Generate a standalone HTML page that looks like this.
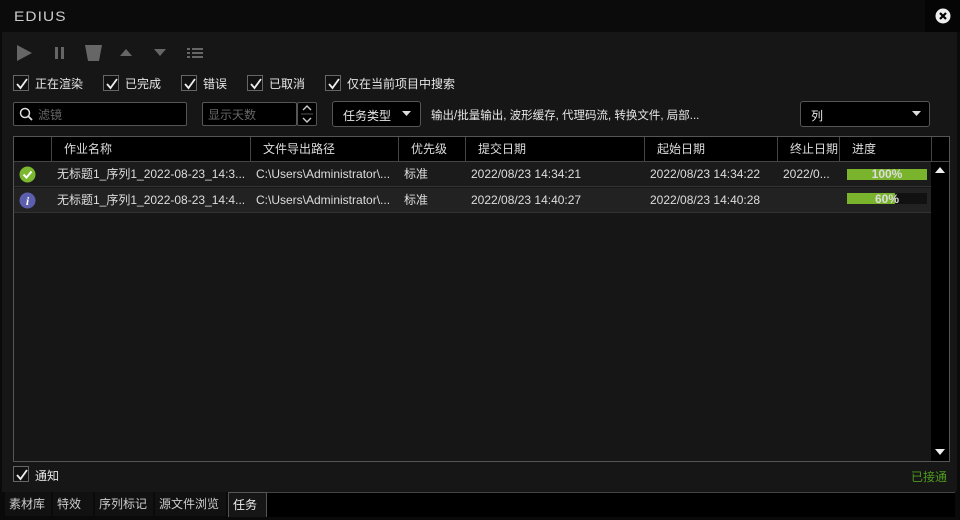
<!DOCTYPE html>
<html><head><meta charset="utf-8"><style>
*{box-sizing:border-box;margin:0;padding:0}
body{width:960px;height:520px;background:#0a0a0a;font-family:"Liberation Sans","Noto Sans CJK SC",sans-serif;font-size:12px;color:#ddd;position:relative;overflow:hidden}
.a{position:absolute}
.title{left:0;top:0;width:960px;height:32px;background:#0b0b0b}
.main{left:2px;top:32px;width:955px;height:460px;background:#161616}
.cb{position:absolute;width:16px;height:16px;border:1px solid #666;background:#111}
.cb svg{position:absolute;left:1px;top:1px}
.lbl{position:absolute;font-size:12px;color:#e6e6e6;white-space:nowrap}
.box{position:absolute;border:1px solid #555;border-radius:2px;background:#000}
.th{position:absolute;top:137px;height:24px;line-height:24px;border-right:1px solid #444;color:#ddd;white-space:nowrap;overflow:hidden}
.td{position:absolute;height:25px;line-height:25px;white-space:nowrap;color:#ddd}
.tab{position:absolute;top:492px;height:24px;line-height:24px;background:#111;color:#ccc;padding-left:4px;font-size:12px}
</style></head><body>
<div class="a title"></div>
<div class="a" style="left:14px;top:8px;font-size:14px;color:#ccc;letter-spacing:1px;transform:scaleX(1.1);transform-origin:left">EDIUS</div>
<div class="a" style="left:925px;top:0;width:35px;height:32px;background:#050505"></div>
<svg class="a" style="left:935px;top:8px" width="16" height="16"><circle cx="8" cy="8" r="7.5" fill="#eee"/><path d="M5 5L11 11M11 5L5 11" stroke="#000" stroke-width="2.2"/></svg>
<div class="a main"></div>
<!-- toolbar -->
<svg class="a" style="left:16px;top:44px" width="200" height="18">
<path d="M1 1L16 9L1 17Z" fill="#666"/>
<rect x="39" y="3" width="3" height="12" fill="#666"/><rect x="45" y="3" width="3" height="12" fill="#666"/>
<path d="M69 1H86L83 17H72Z" fill="#666"/>
<path d="M104 12L110 5L116 12Z" fill="#666"/>
<path d="M138 5L144 12L150 5Z" fill="#666"/>
<g fill="#666"><rect x="171" y="4" width="3" height="2"/><rect x="176" y="4" width="11" height="2"/><rect x="171" y="8" width="3" height="2"/><rect x="176" y="8" width="11" height="2"/><rect x="171" y="12" width="3" height="2"/><rect x="176" y="12" width="11" height="2"/></g>
</svg>
<!-- checkboxes -->
<div class="cb" style="left:13px;top:75px"><svg width="14" height="14"><path d="M2 7L5.5 11L12 2" stroke="#eee" stroke-width="1.8" fill="none"/></svg></div><div class="lbl" style="left:35px;top:75px">正在渲染</div>
<div class="cb" style="left:103px;top:75px"><svg width="14" height="14"><path d="M2 7L5.5 11L12 2" stroke="#eee" stroke-width="1.8" fill="none"/></svg></div><div class="lbl" style="left:125px;top:75px">已完成</div>
<div class="cb" style="left:181px;top:75px"><svg width="14" height="14"><path d="M2 7L5.5 11L12 2" stroke="#eee" stroke-width="1.8" fill="none"/></svg></div><div class="lbl" style="left:203px;top:75px">错误</div>
<div class="cb" style="left:247px;top:75px"><svg width="14" height="14"><path d="M2 7L5.5 11L12 2" stroke="#eee" stroke-width="1.8" fill="none"/></svg></div><div class="lbl" style="left:269px;top:75px">已取消</div>
<div class="cb" style="left:325px;top:75px"><svg width="14" height="14"><path d="M2 7L5.5 11L12 2" stroke="#eee" stroke-width="1.8" fill="none"/></svg></div><div class="lbl" style="left:347px;top:75px">仅在当前项目中搜索</div>
<!-- filters -->
<div class="box" style="left:13px;top:102px;width:174px;height:24px"></div>
<svg class="a" style="left:19px;top:107px" width="14" height="14"><circle cx="6" cy="6" r="4.5" stroke="#ddd" stroke-width="1.5" fill="none"/><path d="M9.5 9.5L13 13" stroke="#ddd" stroke-width="1.8"/></svg>
<div class="lbl" style="left:38px;top:106px;color:#666">滤镜</div>
<div class="box" style="left:202px;top:102px;width:95px;height:24px"></div>
<div class="lbl" style="left:208px;top:106px;color:#666">显示天数</div>
<div class="box" style="left:297px;top:102px;width:20px;height:24px"></div>
<svg class="a" style="left:301px;top:104px" width="12" height="20"><path d="M2 6L6 2L10 6M2 14L6 18L10 14" stroke="#ccc" stroke-width="1.4" fill="none"/><line x1="0" y1="10" x2="12" y2="10" stroke="#555"/></svg>
<div class="box" style="left:332px;top:101px;width:89px;height:26px;border-radius:3px"></div>
<div class="lbl" style="left:343px;top:107px">任务类型</div>
<svg class="a" style="left:402px;top:111px" width="10" height="6"><path d="M0 0H9L4.5 5Z" fill="#ddd"/></svg>
<div class="lbl" style="left:431px;top:107px;font-size:11.5px">输出/批量输出, 波形缓存, 代理码流, 转换文件, 局部...</div>
<div class="box" style="left:800px;top:101px;width:130px;height:26px;border-radius:3px"></div>
<div class="lbl" style="left:811px;top:107px">列</div>
<svg class="a" style="left:912px;top:111px" width="10" height="6"><path d="M0 0H9L4.5 5Z" fill="#ddd"/></svg>
<!-- table -->
<div class="a" style="left:13px;top:136px;width:937px;height:326px;border:1px solid #555;background:#161616"></div>
<div class="a" style="left:14px;top:137px;width:935px;height:25px;background:#000;border-bottom:1px solid #444"></div>
<div class="th" style="left:14px;width:38px"></div>
<div class="th" style="left:52px;width:199px;padding-left:12px">作业名称</div>
<div class="th" style="left:251px;width:148px;padding-left:12px">文件导出路径</div>
<div class="th" style="left:399px;width:67px;padding-left:12px">优先级</div>
<div class="th" style="left:466px;width:179px;padding-left:12px">提交日期</div>
<div class="th" style="left:645px;width:133px;padding-left:12px">起始日期</div>
<div class="th" style="left:778px;width:62px;padding-left:12px">终止日期</div>
<div class="th" style="left:840px;width:92px;padding-left:12px">进度</div>
<div class="a" style="left:14px;top:162px;width:917px;height:25px;background:#1b1b1b;border-bottom:1px solid #333"></div>
<div class="a" style="left:14px;top:188px;width:917px;height:25px;background:#222;border-bottom:1px solid #333"></div>
<div class="a" style="left:931px;top:162px;width:18px;height:299px;background:#000"></div>
<svg class="a" style="left:935px;top:167px" width="11" height="7"><path d="M0 6H10L5 0Z" fill="#eee"/></svg>
<svg class="a" style="left:935px;top:449px" width="11" height="7"><path d="M0 0H10L5 6Z" fill="#eee"/></svg>
<svg class="a" style="left:19px;top:166px" width="17" height="17"><circle cx="8.5" cy="8.5" r="8" fill="#7cb82f"/><path d="M4.5 8.5L7.5 11.5L12.5 5.5" stroke="#fff" stroke-width="2" fill="none"/></svg>
<svg class="a" style="left:19px;top:192px" width="17" height="17"><circle cx="8.5" cy="8.5" r="8" fill="#5b5fae"/><text x="8.5" y="13" font-size="12" font-style="italic" font-weight="bold" fill="#fff" text-anchor="middle" font-family="Liberation Serif">i</text></svg>
<div class="td" style="left:57px;top:162px">无标题1_序列1_2022-08-23_14:3...</div>
<div class="td" style="left:256px;top:162px">C:\Users\Administrator\...</div>
<div class="td" style="left:404px;top:162px">标准</div>
<div class="td" style="left:471px;top:162px">2022/08/23 14:34:21</div>
<div class="td" style="left:650px;top:162px">2022/08/23 14:34:22</div>
<div class="td" style="left:783px;top:162px">2022/0...</div>
<div class="a" style="left:847px;top:169px;width:80px;height:11px;background:#7ab32c"></div>
<div class="td" style="left:847px;top:162px;width:80px;text-align:center;font-weight:bold;color:#ddd">100%</div>
<div class="td" style="left:57px;top:188px">无标题1_序列1_2022-08-23_14:4...</div>
<div class="td" style="left:256px;top:188px">C:\Users\Administrator\...</div>
<div class="td" style="left:404px;top:188px">标准</div>
<div class="td" style="left:471px;top:188px">2022/08/23 14:40:27</div>
<div class="td" style="left:650px;top:188px">2022/08/23 14:40:28</div>
<div class="a" style="left:847px;top:193px;width:80px;height:11px;background:#111"></div>
<div class="a" style="left:847px;top:193px;width:48px;height:11px;background:#7ab32c"></div>
<div class="td" style="left:847px;top:187px;width:80px;text-align:center;font-weight:bold;color:#ddd">60%</div>
<!-- bottom -->
<div class="cb" style="left:13px;top:466px"><svg width="14" height="14"><path d="M2 7L5.5 11L12 2" stroke="#eee" stroke-width="1.8" fill="none"/></svg></div><div class="lbl" style="left:35px;top:467px">通知</div>
<div class="lbl" style="left:911px;top:468px;color:#4f9a1e">已接通</div>
<div class="a" style="left:0;top:492px;width:960px;height:28px;background:#0a0a0a"></div>
<div class="a" style="left:267px;top:492px;width:688px;height:25px;background:#000;border-top:1px solid #444"></div>
<div class="tab" style="left:5px;width:46px">素材库</div>
<div class="tab" style="left:53px;width:40px">特效</div>
<div class="tab" style="left:95px;width:58px">序列标记</div>
<div class="tab" style="left:155px;width:71px">源文件浏览</div>
<div class="tab" style="left:228px;width:39px;background:#161616;border:1px solid #555;border-bottom:none;color:#eee;height:25px">任务</div>
</body></html>
